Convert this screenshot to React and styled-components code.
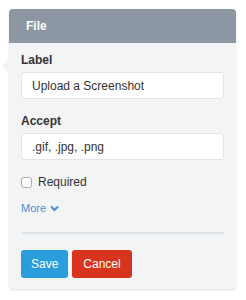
import React from 'react'
import styled, { createGlobalStyle } from 'styled-components'

const Global = createGlobalStyle`
  body {
    margin: 0;
    background: #ffffff;
    font-family: "Liberation Sans", Arial, sans-serif;
  }
`

const Page = styled.div`
  padding: 9px 10px 10px 9px;
`

const Card = styled.section`
  position: relative;
  background: #f3f4f6;
  border-radius: 4px;
  box-shadow: 0 1px 2px rgba(0, 0, 0, 0.14);

  &::before {
    content: '';
    position: absolute;
    left: -7px;
    top: 50px;
    border-top: 7px solid transparent;
    border-bottom: 7px solid transparent;
    border-right: 7px solid #f3f4f6;
  }
`

const Header = styled.header`
  height: 34px;
  display: flex;
  align-items: center;
  padding-left: 17px;
  background: #8c97a3;
  border-radius: 4px 4px 0 0;
  color: #fff;
  font-weight: bold;
  font-size: 12px;
`

const Body = styled.div`
  padding: 9px 12px 11px;
  display: flex;
  flex-direction: column;
`

const FieldLabel = styled.label`
  font-size: 12px;
  font-weight: bold;
  color: #333;
  line-height: 16px;
  margin-bottom: 4px;
  margin-top: ${p => (p.$first ? '0' : '14px')};
`

const TextInput = styled.input`
  box-sizing: border-box;
  height: 27px;
  width: 100%;
  border: 1px solid #e2e4e8;
  border-radius: 3px;
  background: #fff;
  padding: 0 10px;
  font-family: inherit;
  font-size: 12px;
  color: #333;
  outline: none;
`

const CheckRow = styled.label`
  display: flex;
  align-items: center;
  gap: 6px;
  margin-top: 14px;
  font-size: 12px;
  color: #333;
  line-height: 16px;
`

const Box = styled.span`
  box-sizing: border-box;
  width: 11px;
  height: 11px;
  border: 1px solid #a9adb3;
  border-radius: 3px;
  background: #fff;
`

const MoreLink = styled.a`
  display: flex;
  align-items: center;
  gap: 4px;
  margin-top: 11px;
  font-size: 11px;
  color: #4a90d9;
  text-decoration: none;
  line-height: 15px;
`

const Divider = styled.hr`
  border: none;
  height: 2px;
  background: #dfe2e6;
  margin: 16px 0 16px;
  width: 100%;
`

const Actions = styled.div`
  display: flex;
  gap: 4px;
`

const Button = styled.button`
  height: 28px;
  padding: 0 ${p => p.$pad}px;
  border: none;
  border-radius: 3px;
  background: ${p => p.$bg};
  color: #fff;
  font-family: inherit;
  font-size: 12px;
`

export default function App() {
  return (
    <Page>
      <Global />
      <Card>
        <Header>File</Header>
        <Body>
          <FieldLabel $first>Label</FieldLabel>
          <TextInput defaultValue="Upload a Screenshot" />
          <FieldLabel>Accept</FieldLabel>
          <TextInput defaultValue=".gif, .jpg, .png" />
          <CheckRow>
            <Box />
            Required
          </CheckRow>
          <MoreLink href="#">
            More
            <svg width="9" height="7" viewBox="0 0 9 7">
              <path d="M1 1.5 L4.5 5 L8 1.5" fill="none" stroke="#4a90d9" strokeWidth="2" />
            </svg>
          </MoreLink>
          <Divider />
          <Actions>
            <Button $bg="#2a9ddd" $pad={10}>Save</Button>
            <Button $bg="#d9341d" $pad={11}>Cancel</Button>
          </Actions>
        </Body>
      </Card>
    </Page>
  )
}
